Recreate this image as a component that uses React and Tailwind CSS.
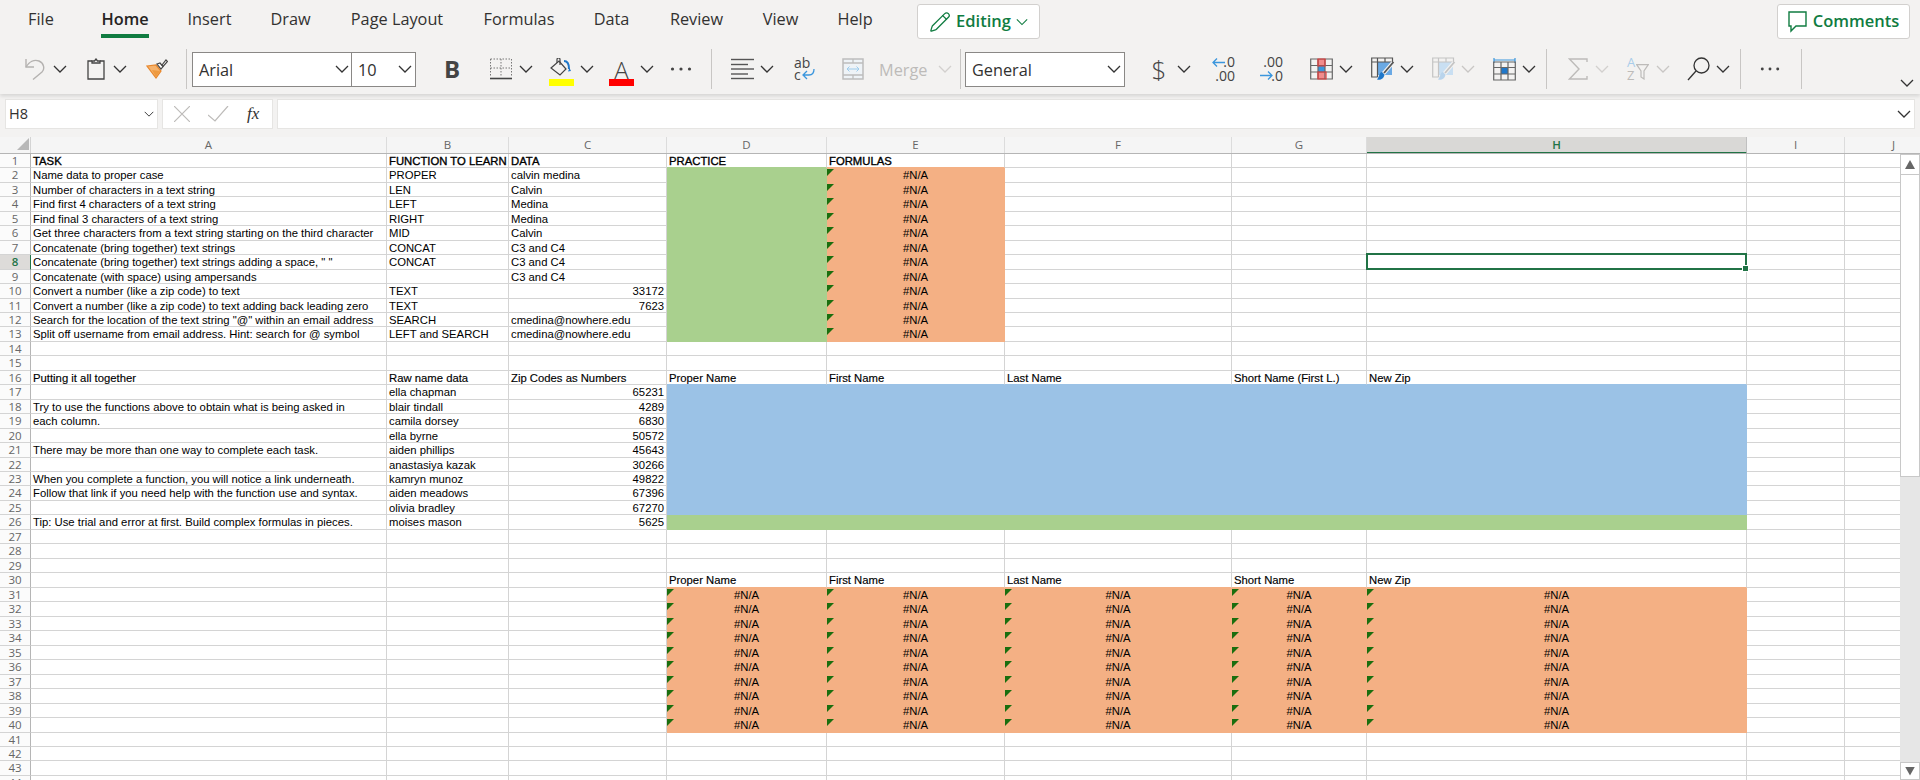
import React from "react";
import { Pencil } from "lucide-react";

const UI = "font-['Open_Sans',sans-serif]";
const LINE = "border-[#d4d4d4]";

// === Grid geometry ===
const COLS = [
  { k: "A", w: "w-[356px]" },
  { k: "B", w: "w-[122px]" },
  { k: "C", w: "w-[158px]" },
  { k: "D", w: "w-[160px]" },
  { k: "E", w: "w-[178px]" },
  { k: "F", w: "w-[227px]" },
  { k: "G", w: "w-[135px]" },
  { k: "H", w: "w-[380px]" },
  { k: "I", w: "w-[98px]" },
  { k: "J", w: "w-[98px]" },
];

// row lines in the sheet drift between 14 and 15px
const ROW_LINES = [153, 167, 182, 196, 211, 225, 240, 254, 269, 283, 298, 312, 326, 341, 355, 370, 384, 399, 413, 428, 442, 457, 471, 485, 500, 514, 529, 543, 558, 572, 587, 601, 616, 630, 645, 659, 674, 688, 703, 717, 732, 746, 760, 775, 789];

const CELLS = {
  1: { A: "TASK", B: "FUNCTION TO LEARN", C: "DATA", D: "PRACTICE", E: "FORMULAS" },
  2: { A: "Name data to proper case", B: "PROPER", C: "calvin medina" },
  3: { A: "Number of characters in a text string", B: "LEN", C: "Calvin" },
  4: { A: "Find first 4 characters of a text string", B: "LEFT", C: "Medina" },
  5: { A: "Find final 3 characters of a text string", B: "RIGHT", C: "Medina" },
  6: { A: "Get three characters from a text string starting on the third character", B: "MID", C: "Calvin" },
  7: { A: "Concatenate (bring together) text strings", B: "CONCAT", C: "C3 and C4" },
  8: { A: 'Concatenate (bring together) text strings adding a space, " "', B: "CONCAT", C: "C3 and C4" },
  9: { A: "Concatenate (with space) using ampersands", C: "C3 and C4" },
  10: { A: "Convert a number (like a zip code) to text", B: "TEXT", C: 33172 },
  11: { A: "Convert a number (like a zip code) to text adding back leading zero", B: "TEXT", C: 7623 },
  12: { A: 'Search for the location of the text string "@" within an email address', B: "SEARCH", C: "cmedina@nowhere.edu" },
  13: { A: "Split off username from email address. Hint: search for @ symbol", B: "LEFT and SEARCH", C: "cmedina@nowhere.edu" },
  16: { A: "Putting it all together", B: "Raw name data", C: "Zip Codes as Numbers", D: "Proper Name", E: "First Name", F: "Last Name", G: "Short Name (First L.)", H: "New Zip" },
  17: { B: "ella chapman", C: 65231 },
  18: { A: "Try to use the functions above to obtain what is being asked in", B: "blair tindall", C: 4289 },
  19: { A: "each column.", B: "camila dorsey", C: 6830 },
  20: { B: "ella byrne", C: 50572 },
  21: { A: "There may be more than one way to complete each task.", B: "aiden phillips", C: 45643 },
  22: { B: "anastasiya kazak", C: 30266 },
  23: { A: "When you complete a function, you will notice a link underneath.", B: "kamryn munoz", C: 49822 },
  24: { A: "Follow that link if you need help with the function use and syntax.", B: "aiden meadows", C: 67396 },
  25: { B: "olivia bradley", C: 67270 },
  26: { A: "Tip: Use trial and error at first. Build complex formulas in pieces.", B: "moises mason", C: 5625 },
  30: { D: "Proper Name", E: "First Name", F: "Last Name", G: "Short Name", H: "New Zip" },
};

const GREEN = "bg-[#a9d08e] border-[#a9d08e]";
const ORANGE = "bg-[#f4b084] border-[#f4b084]";
const BLUE = "bg-[#9bc2e6] border-[#9bc2e6]";

function fillFor(row, col) {
  const wide = "DEFGH".includes(col);
  if (row >= 2 && row <= 13 && col === "D") return GREEN;
  if (row >= 2 && row <= 13 && col === "E") return ORANGE;
  if (row >= 17 && row <= 25 && wide) return BLUE;
  if (row === 26 && wide) return GREEN;
  if (row >= 31 && row <= 40 && wide) return ORANGE;
  return null;
}

function isError(row, col) {
  return (row >= 2 && row <= 13 && col === "E") || (row >= 31 && row <= 40 && "DEFGH".includes(col));
}

// cell just above a filled one loses its grid line to the fill
function bottomLine(row, col) {
  if (row === 1 && col === "D") return "border-b-[#a9d08e]";
  if (row === 1 && col === "E") return "border-b-[#f4b084]";
  if (row === 16 && "DEFGH".includes(col)) return "border-b-[#9bc2e6]";
  if (row === 30 && "DEFGH".includes(col)) return "border-b-[#f4b084]";
  return "";
}

function Chevron({ className = "", color = "#333" }) {
  return (
    <svg width="14" height="8" viewBox="0 0 14 8" className={`shrink-0 ${className}`} fill="none" stroke={color} strokeWidth="1.3">
      <path d="M1 1l6 6 6-6" />
    </svg>
  );
}

function Sep({ className = "" }) {
  return <div className={`w-px h-[40px] bg-[#c8c6c4] shrink-0 ${className}`} />;
}

function Dots({ className = "", w = 22 }) {
  return (
    <svg width={w} height="6" viewBox="0 0 22 6" className={`shrink-0 ${className}`} fill="#444">
      <circle cx="2.5" cy="3" r="1.6" />
      <circle cx="11" cy="3" r="1.6" />
      <circle cx="19.5" cy="3" r="1.6" />
    </svg>
  );
}

function Undo({ className }) {
  return (
    <svg width="21" height="22" viewBox="0 0 21 22" className={className} fill="none" stroke="#b4b2b0" strokeWidth="1.4">
      <path d="M1 1v8h8" />
      <path d="M1 9c3-5 8-8 13-6 5 2 6 8 3 11l-9 7.5" />
    </svg>
  );
}

function Clipboard({ className }) {
  return (
    <svg width="18" height="22" viewBox="0 0 18 22" className={className} fill="none" stroke="#444" strokeWidth="1.3">
      <path d="M5 3H1v18h16V3h-4" />
      <path d="M5 5V3h2.5l1.5-2 1.5 2H13v2z" fill="#f3f2f1" />
    </svg>
  );
}

function Painter({ className }) {
  return (
    <svg width="22" height="20" viewBox="0 0 22 20" className={className}>
      <path d="M1 7l9-1 5 6-5 7z" fill="#f6b26b" stroke="#e8872b" strokeWidth="1.2" />
      <path d="M6 11l8 1-4 6z" fill="#ee9a3f" />
      <path d="M11 5l3-1 3 3.5-2 2.5z" fill="#fff" stroke="#444" strokeWidth="1.2" />
      <path d="M16 6l4-5 1.5 1.5-4.5 5z" fill="#fff" stroke="#444" strokeWidth="1.2" />
    </svg>
  );
}

function Borders({ className }) {
  return (
    <svg width="22" height="22" viewBox="0 0 22 22" className={className} fill="none">
      <path d="M.5 1h21M.5 10h21M.5 1v18M11 1v18M21.500 1v18" stroke="#777" strokeDasharray="1.500 1.500" />
      <path d="M0 20.500h22" stroke="#444" strokeWidth="1.600" />
    </svg>
  );
}

function Fill({ className }) {
  return (
    <div className={`relative w-[25px] h-[28px] shrink-0 ${className}`}>
      <svg width="25" height="18" viewBox="0 0 25 18" className="block" fill="none">
        <path d="M2 10l8-7 7 8-6 6z" stroke="#444" strokeWidth="1.2" />
        <path d="M8 5V1.500a1.500 1.500 0 0 1 3 0V7" stroke="#444" strokeWidth="1.200" />
        <path d="M15 3c3 0 5 3 5 8" stroke="#1f77c9" strokeWidth="2" />
        <path d="M20.500 10l1.500 3-3 .5z" fill="#1f77c9" />
      </svg>
      <div className="absolute left-0 bottom-0 w-[25px] h-[7px] bg-[#ffff00]" />
    </div>
  );
}

function FontColor({ className }) {
  return (
    <div className={`relative w-[25px] h-[28px] shrink-0 flex justify-center ${className}`}>
      <span className="text-[24px] leading-[24px] font-light text-[#444] font-['Open_Sans',sans-serif]">A</span>
      <div className="absolute left-0 bottom-0 w-[25px] h-[7px] bg-[#ff0000]" />
    </div>
  );
}

function AlignLeft({ className }) {
  return (
    <svg width="23" height="22" viewBox="0 0 23 22" className={className} stroke="#555" fill="none">
      <path d="M0 1.500h23" strokeWidth="1.400" />
      <path d="M0 6.500h17" strokeWidth="1.400" />
      <path d="M0 11h23" strokeWidth="1.400" />
      <path d="M0 16h17" strokeWidth="1.400" />
      <path d="M0 20.500h23" strokeWidth="1.400" />
    </svg>
  );
}

function Wrap({ className }) {
  return (
    <div className={`relative w-[21px] h-[24px] shrink-0 text-[#444] font-['Open_Sans',sans-serif] text-[14px] leading-[12px] ${className}`}>
      <span className="absolute left-0 top-0">ab</span>
      <span className="absolute left-0 top-[12px]">c</span>
      <svg width="13" height="11" viewBox="0 0 13 11" className="absolute left-[8px] top-[12px]" fill="none" stroke="#3a96dd" strokeWidth="1.300">
        <path d="M12 0c0 4-2 6-5 6H1M5 2L1 6l4 4" />
      </svg>
    </div>
  );
}

function MergeIcon({ className }) {
  return (
    <svg width="22" height="22" viewBox="0 0 22 22" className={className} fill="none">
      <rect x="1" y="1" width="20" height="20" stroke="#bdbdbd" strokeWidth="1.500" fill="#eef3f7" />
      <path d="M1 5h20M1 17h20M11 1v4M11 17v4" stroke="#bdbdbd" strokeWidth="1.300" />
      <path d="M5 11h12M7.500 8.500L5 11l2.500 2.500M14.500 8.500L17 11l-2.500 2.500" stroke="#9ccbec" />
    </svg>
  );
}

function Decimals({ top, bottom, arrowTop, className }) {
  return (
    <div className={`relative w-[23px] h-[24px] shrink-0 text-[14px] leading-[12px] text-[#444] font-['Open_Sans',sans-serif] ${className}`}>
      <span className="absolute right-0 top-[-1px]">{top}</span>
      <span className="absolute right-0 top-[13px]">{bottom}</span>
      <svg width="13" height="9" viewBox="0 0 13 9" className={`absolute left-0 ${arrowTop ? "top-[1px]" : "top-[14px]"}`} fill="none" stroke="#3a96dd" strokeWidth="1.300">
        {arrowTop ? <path d="M13 4.500H1M5 .5l-4 4 4 4" /> : <path d="M0 4.500h12M8 .5l4 4-4 4" />}
      </svg>
    </div>
  );
}

function CondFormat({ className }) {
  return (
    <svg width="23" height="22" viewBox="0 0 23 22" className={className} fill="none">
      <rect x="8" y="1" width="7" height="7" fill="#f28b8b" />
      <rect x="8" y="8" width="7" height="6" fill="#3a96dd" />
      <rect x="8" y="14" width="7" height="7" fill="#f28b8b" />
      <path d="M.7 1h21.600v20H.7zM8 1v20M15 1v20M.7 7.500h21.600M.7 14h21.600" stroke="#666" strokeWidth="1.200" />
      <path d="M8 1h7v7H8zM8 14h8v7H8z" stroke="#e23b3b" strokeWidth="1.200" />
    </svg>
  );
}

function TableStyle({ muted, className }) {
  const blue = muted ? "#c9dff2" : "#6aa9e4";
  const edge = muted ? "#c4c4c4" : "#555";
  const brush = muted ? "#b9d4ec" : "#1f77c9";
  return (
    <svg width="24" height="24" viewBox="0 0 24 24" className={className} fill="none">
      <rect x="6" y="5" width="15" height="13" fill={blue} />
      <path d="M21.500 6V1H.7v19h6M.7 5h20.800M6.500 1v19M14 1v4" stroke={edge} strokeWidth="1.200" />
      <path d="M12 17L22 5.500" stroke="#f3f2f1" strokeWidth="4" />
      <path d="M13 16L22.500 5" stroke={edge} strokeWidth="1.800" />
      <path d="M6 22.500c3 1 7-.5 7.500-5L11 15c-3 .5-2.500 5-5 7.500z" fill={brush} />
    </svg>
  );
}

function FormatCells({ className }) {
  return (
    <svg width="23" height="24" viewBox="0 0 23 24" className={className} fill="none">
      <path d="M1 1v5M22 1v5M1 3h21" stroke="#3a96dd" strokeWidth="1.200" />
      <rect x="8" y="10" width="7" height="7" fill="#1f77c9" />
      <path d="M.7 5h21.600v18H.7zM8 5v18M15 5v18M.7 10.500h21.600M.7 17h21.600" stroke="#666" strokeWidth="1.200" />
    </svg>
  );
}

function Sigma({ className }) {
  return (
    <svg width="20" height="22" viewBox="0 0 20 22" className={className} fill="none" stroke="#bdbbb9" strokeWidth="1.400">
      <path d="M19 4V1H1.500L11 11 1.500 21H19v-3" />
    </svg>
  );
}

function SortFilter({ className }) {
  return (
    <div className={`relative w-[22px] h-[24px] shrink-0 text-[13px] leading-[12px] font-['Open_Sans',sans-serif] ${className}`}>
      <span className="absolute left-0 top-[-1px] text-[#a9cdea]">A</span>
      <span className="absolute left-0 top-[12px] text-[#bdbbb9]">Z</span>
      <svg width="13" height="16" viewBox="0 0 13 16" className="absolute left-[9px] top-[7px]" fill="none" stroke="#bdbbb9" strokeWidth="1.200">
        <path d="M.7.7h11.600L8 7v8l-3-2V7z" />
      </svg>
    </div>
  );
}

function Find({ className }) {
  return (
    <svg width="23" height="24" viewBox="0 0 23 24" className={className} fill="none" stroke="#333" strokeWidth="1.300">
      <circle cx="14.500" cy="8.500" r="7.500" />
      <path d="M9 14L1 23" />
    </svg>
  );
}

function TabItem({ w, ml, active, children }) {
  return (
    <div className={`relative shrink-0 flex justify-center whitespace-nowrap text-[16.300px] leading-[38px] h-[40px] ${w} ${ml} ${active ? "font-semibold text-[#252423]" : "text-[#323130]"}`}>
      {children}
      {active && <div className="absolute left-0 right-0 top-[34px] h-[4px] bg-[#107c41]" />}
    </div>
  );
}

function Ribbon() {
  return (
    <div className={`relative z-10 h-[94px] shrink-0 bg-[#f3f2f1] shadow-[0_2px_4px_rgba(0,0,0,0.13)] ${UI}`}>
      <div className="flex items-start h-[46px]">
        <TabItem w="w-[26px]" ml="ml-[28px]">File</TabItem>
        <TabItem w="w-[48px]" ml="ml-[47px]" active>Home</TabItem>
        <TabItem w="w-[43px]" ml="ml-[39px]">Insert</TabItem>
        <TabItem w="w-[39px]" ml="ml-[40px]">Draw</TabItem>
        <TabItem w="w-[94px]" ml="ml-[40px]">Page Layout</TabItem>
        <TabItem w="w-[70px]" ml="ml-[40px]">Formulas</TabItem>
        <TabItem w="w-[35px]" ml="ml-[40px]">Data</TabItem>
        <TabItem w="w-[53px]" ml="ml-[41px]">Review</TabItem>
        <TabItem w="w-[37px]" ml="ml-[39px]">View</TabItem>
        <TabItem w="w-[36px]" ml="ml-[38px]">Help</TabItem>
        <div className="ml-[44px] mt-[4px] w-[123px] h-[35px] bg-white border border-[#d2d0ce] rounded-[3px] flex items-center justify-center gap-[5px] text-[#107c41] font-semibold text-[16.500px]">
          <Pencil size={22} strokeWidth={1.400} />
          <span>Editing</span>
          <Chevron color="#107c41" className="w-[12px]" />
        </div>
        <div className="ml-auto mr-[10px] mt-[4px] w-[133px] h-[35px] bg-white border border-[#d2d0ce] rounded-[3px] flex items-center justify-center gap-[6px] text-[#107c41] font-semibold text-[16.500px]">
          <svg width="19" height="22" viewBox="0 0 19 22" fill="none" stroke="#107c41" strokeWidth="1.400">
            <path d="M1 1h17v14H8l-5 5v-5H1z" />
          </svg>
          <span>Comments</span>
        </div>
      </div>
      <div className="flex items-center h-[40px] mt-[3px]">
        <Undo className="ml-[25px] shrink-0" />
        <Chevron className="ml-[7px]" />
        <Clipboard className="ml-[20px] shrink-0" />
        <Chevron className="ml-[8px]" />
        <Painter className="ml-[19px] shrink-0" />
        <Sep className="ml-[18px]" />
        <div className="ml-[5px] flex h-[35px] w-[224px] shrink-0 bg-white border border-[#8a8886] text-[16.300px] text-[#323130]">
          <div className="w-[159px] flex items-center justify-between pl-[6px] pr-[2px] border-r border-[#8a8886]">
            <span className="pt-[2px]">Arial</span>
            <Chevron />
          </div>
          <div className="flex-1 flex items-center justify-between pl-[6px] pr-[3px]">
            <span className="pt-[2px]">10</span>
            <Chevron />
          </div>
        </div>
        <span className="ml-[28px] w-[16px] shrink-0 text-center text-[24px] leading-[30px] font-bold text-[#444]">B</span>
        <Borders className="ml-[30px] shrink-0" />
        <Chevron className="ml-[7px]" />
        <Fill className="ml-[16px] mt-[6px]" />
        <Chevron className="ml-[6px]" />
        <FontColor className="ml-[15px] mt-[6px]" />
        <Chevron className="ml-[6px]" />
        <Dots className="ml-[16px]" />
        <Sep className="ml-[19px]" />
        <AlignLeft className="ml-[19px] shrink-0" />
        <Chevron className="ml-[6px]" />
        <Wrap className="ml-[20px]" />
        <MergeIcon className="ml-[27px] shrink-0" />
        <span className="ml-[15px] w-[50px] shrink-0 whitespace-nowrap pt-[2px] text-[16.300px] text-[#bdbbb9]">Merge</span>
        <Chevron className="ml-[9px]" color="#d2d0ce" />
        <Sep className="ml-[8px]" />
        <div className="ml-[4px] w-[160px] h-[35px] shrink-0 bg-white border border-[#8a8886] flex items-center justify-between pl-[6px] pr-[3px] text-[16.300px] text-[#323130]">
          <span className="pt-[2px]">General</span>
          <Chevron />
        </div>
        <span className="ml-[26px] w-[16px] shrink-0 text-center text-[26px] leading-[32px] font-light text-[#444]">$</span>
        <Chevron className="ml-[10px]" />
        <Decimals className="ml-[21px]" top=".0" bottom=".00" arrowTop />
        <Decimals className="ml-[25px]" top=".00" bottom=".0" />
        <CondFormat className="ml-[27px] shrink-0" />
        <Chevron className="ml-[6px]" />
        <TableStyle className="ml-[18px] shrink-0" />
        <Chevron className="ml-[5px]" />
        <TableStyle muted className="ml-[18px] shrink-0" />
        <Chevron className="ml-[5px]" color="#c8c6c4" />
        <FormatCells className="ml-[18px] shrink-0" />
        <Chevron className="ml-[6px]" />
        <Sep className="ml-[10px]" />
        <Sigma className="ml-[21px] shrink-0" />
        <Chevron className="ml-[7px]" color="#d2d0ce" />
        <SortFilter className="ml-[18px]" />
        <Chevron className="ml-[7px]" color="#c8c6c4" />
        <Find className="ml-[17px] shrink-0" />
        <Chevron className="ml-[6px]" />
        <Sep className="ml-[10px]" />
        <Dots className="ml-[19px]" w={20} />
        <Sep className="ml-[21px]" />
        <Chevron className="ml-[98px] mt-[28px]" />
      </div>
    </div>
  );
}

function FormulaBar() {
  return (
    <div className={`h-[43px] shrink-0 bg-[#f3f2f1] flex items-start pt-[5px] pl-[5px] pr-[5px] ${UI}`}>
      <div className="w-[153px] h-[30px] bg-white border border-[#e6e5e3] flex items-center justify-between pl-[3px] pr-[3px] text-[14.500px] text-[#323130]">
        <span>H8</span>
        <Chevron className="w-[10px]" />
      </div>
      <div className="ml-[4px] w-[111px] h-[30px] bg-white border border-[#e6e5e3] flex items-center">
        <svg width="16" height="16" viewBox="0 0 16 16" className="ml-[11px]" fill="none" stroke="#bdbbb9" strokeWidth="1.200">
          <path d="M0 0l16 16M16 0L0 16" />
        </svg>
        <svg width="21" height="16" viewBox="0 0 21 16" className="ml-[18px]" fill="none" stroke="#bdbbb9" strokeWidth="1.200">
          <path d="M0 9l7 6L20 0" />
        </svg>
        <span className="ml-[18px] font-['Liberation_Serif',serif] italic text-[17px] text-[#323130]">fx</span>
      </div>
      <div className="ml-[4px] flex-1 h-[30px] bg-white border border-[#e6e5e3] flex items-center justify-end pr-[3px]">
        <Chevron />
      </div>
    </div>
  );
}

function ColumnHeader() {
  return (
    <div className={`relative h-[17px] shrink-0 flex bg-[#f5f5f5] border-b border-[#b5b5b5] overflow-hidden text-[11.500px] leading-[16px] text-[#666] ${UI}`}>
      <div className="w-[31px] shrink-0 border-r border-[#d4d4d4] relative">
        <div className="absolute right-[1px] bottom-[3px] w-[12px] h-[12px] bg-[#b8b8b8] [clip-path:polygon(100%_0,100%_100%,0_100%)]" />
      </div>
      {COLS.map((c) =>
        c.k === "H" ? (
          <div key={c.k} className={`${c.w} shrink-0 text-center bg-[#d9d8d6] border-b-2 border-[#217346] border-r border-r-[#c0c0c0] -mb-px font-semibold text-[#217346]`}>
            {c.k}
          </div>
        ) : (
          <div key={c.k} className={`${c.w} shrink-0 text-center border-r border-[#dcdcdc]`}>
            {c.k}
          </div>
        )
      )}
    </div>
  );
}

function weightFor(row) {
  if (row === 1) return "[-webkit-text-stroke:0.35px_#000]";
  if (row === 16 || row === 30) return "[-webkit-text-stroke:0.15px_#000]";
  return "";
}

function Cell({ row, col }) {
  const value = CELLS[row]?.[col.k];
  const fill = fillFor(row, col.k);
  const err = isError(row, col.k);
  const numeric = typeof value === "number";
  const selected = row === 8 && col.k === "H";
  return (
    <div
      className={`relative shrink-0 flex items-center whitespace-nowrap border-b border-r px-[2px] ${col.w} ${fill || `bg-white ${LINE}`} ${bottomLine(row, col.k)} ${err ? "justify-center" : numeric ? "justify-end" : ""} ${weightFor(row)}`}
    >
      {err && <div className="absolute left-0 top-[1px] w-[7px] h-[7px] bg-[#1a6e0e] [clip-path:polygon(0_0,100%_0,0_100%)]" />}
      {err ? "#N/A" : value}
      {selected && (
        <div className="absolute -left-px -top-[2px] -right-px -bottom-px border-2 border-[#217346] z-10">
          <div className="absolute -right-[3px] -bottom-[3px] w-[5px] h-[5px] bg-[#217346] outline outline-1 outline-white" />
        </div>
      )}
    </div>
  );
}

function Sheet() {
  const rows = ROW_LINES.slice(1).map((line, i) => ({ n: i + 1, h: line - ROW_LINES[i] }));
  return (
    <div className="flex-1 min-h-0 flex overflow-hidden">
      <div className="flex-1 min-w-0 overflow-hidden text-[11.300px] leading-[14px] text-black font-['Liberation_Sans',Arial,sans-serif]">
        {rows.map(({ n, h }) => (
          <div key={n} className={`flex ${h === 15 ? "h-[15px]" : "h-[14px]"}`}>
            <div
              className={`w-[31px] shrink-0 text-center border-b border-r border-b-[#d4d4d4] text-[11.500px] ${UI} ${
                n === 8 ? "bg-[#dddbd9] border-r-[#217346] font-semibold text-[#217346]" : "bg-[#fbfbfb] border-r-[#b5b5b5] text-[#666]"
              }`}
            >
              {n}
            </div>
            {COLS.map((c) => (
              <Cell key={c.k} row={n} col={c} />
            ))}
          </div>
        ))}
      </div>
      <div className="relative w-[20px] shrink-0 flex flex-col bg-[#e6e6e6]">
        <div className="h-[21px] shrink-0 bg-white border border-[#c8c8c8] flex items-center justify-center">
          <div className="w-[10px] h-[9px] bg-[#666] [clip-path:polygon(50%_0,100%_100%,0_100%)]" />
        </div>
        <div className="h-[302px] shrink-0 bg-white border border-[#c8c8c8] border-t-0" />
        <div className="mt-auto h-[18px] shrink-0 bg-white border border-[#c8c8c8] flex items-center justify-center">
          <div className="w-[10px] h-[9px] bg-[#666] [clip-path:polygon(0_0,100%_0,50%_100%)]" />
        </div>
      </div>
    </div>
  );
}

export default function App() {
  return (
    <div className="w-[1920px] h-[780px] flex flex-col overflow-hidden bg-white">
      <Ribbon />
      <FormulaBar />
      <ColumnHeader />
      <Sheet />
    </div>
  );
}
